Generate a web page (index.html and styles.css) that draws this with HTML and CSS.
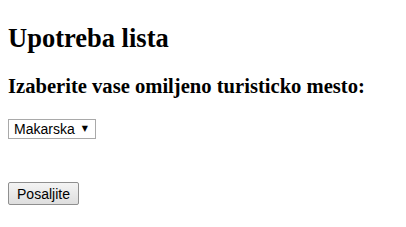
FILE: index.html
```html
<!DOCTYPE html>
<html>
<head>
<meta charset="utf-8">
<link rel="stylesheet" href="styles.css">
</head>
<body>
<h2 class="title">Upotreba lista</h2>
<form class="form">
<h3 class="question">Izaberite vase omiljeno turisticko mesto:</h3>
<div class="row">
<span class="select-wrap">
<select class="select">
<option>Makarska</option>
<option>Budva</option>
<option>Dubrovnik</option>
</select>
<span class="arrow">&#9660;</span>
</span>
</div>
<div class="row row-button">
<button type="button" class="button">Posaljite</button>
</div>
</form>
</body>
</html>
```
FILE: styles.css
```css
html, body {
  background: #ffffff;
}
body {
  margin: 8px;
  font-family: "Liberation Serif", "Times New Roman", serif;
  color: #000;
}
.title {
  font-size: 26.5px;
  line-height: 30px;
  font-weight: bold;
  margin: 15px 0 21px;
}
.question {
  font-size: 20.6px;
  line-height: 24px;
  font-weight: bold;
  margin: 21px 0 21px;
}
.form {
  margin: 0;
}
.row {
  display: flex;
}
.row-button {
  margin-top: 43px;
}
.select-wrap {
  position: relative;
  display: inline-block;
}
.select {
  appearance: none;
  -webkit-appearance: none;
  font-family: "Liberation Sans", Arial, sans-serif;
  font-size: 14px;
  color: #000;
  background: #fff;
  border: 1px solid #a9a9a9;
  border-radius: 0;
  height: 20px;
  width: 88px;
  padding: 0 0 0 5px;
  margin: 0;
  line-height: 18px;
}
.arrow {
  position: absolute;
  right: 8px;
  top: 6px;
  font-size: 8px;
  line-height: 1;
  color: #000;
  pointer-events: none;
  font-family: "DejaVu Sans", sans-serif;
}
.button {
  font-family: "Liberation Sans", Arial, sans-serif;
  font-size: 14px;
  color: #000;
  height: 23px;
  width: 71px;
  padding: 0;
  margin: 0;
  border: 1px solid #8f8f8f;
  border-radius: 2px;
  background: linear-gradient(#f4f4f4, #dedede);
}
```
